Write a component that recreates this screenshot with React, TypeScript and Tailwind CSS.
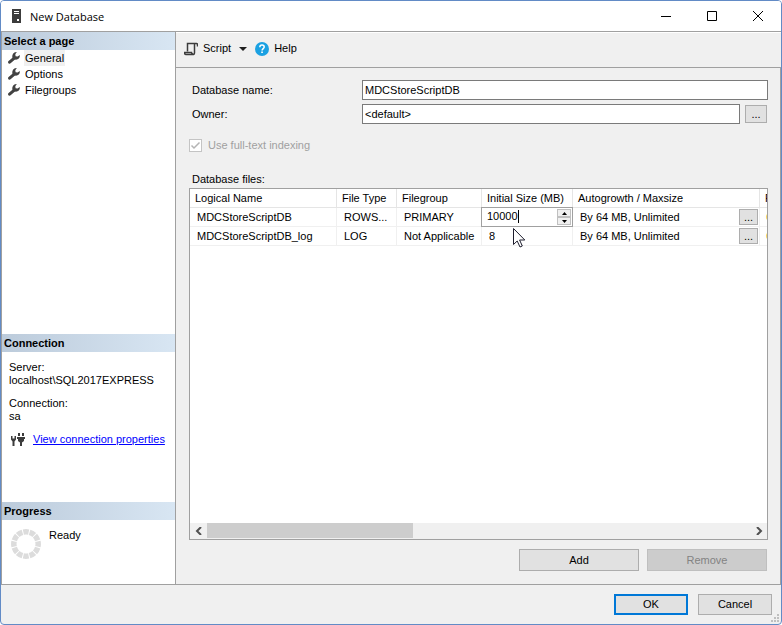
import { useState } from 'react';
import type { ReactNode } from 'react';

interface DbFile {
  name: string;
  type: string;
  filegroup: string;
  size: string;
  growth: string;
  path: string;
}

const pages = ['General', 'Options', 'Filegroups'];

const columns = ['Logical Name', 'File Type', 'Filegroup', 'Initial Size (MB)', 'Autogrowth / Maxsize', 'Path'];

const files: DbFile[] = [
  { name: 'MDCStoreScriptDB', type: 'ROWS...', filegroup: 'PRIMARY', size: '10000', growth: 'By 64 MB, Unlimited', path: 'C:\\' },
  { name: 'MDCStoreScriptDB_log', type: 'LOG', filegroup: 'Not Applicable', size: '8', growth: 'By 64 MB, Unlimited', path: 'C:\\' },
];

const cell = 'h-[19px] border-r border-b border-[#f0f0f0] p-0 pl-[7px] text-left font-normal whitespace-nowrap overflow-hidden';

function ServerIcon() {
  return (
    <svg width="9" height="14" viewBox="0 0 9 14" aria-hidden="true">
      <path d="M0 0h9v14H0z" fill="#3c3c3c" />
      <path d="M2 2h5v1H2zM2 4h5v1H2zM5 10h2v2H5z" fill="#fff" />
    </svg>
  );
}

function WrenchIcon() {
  return (
    <svg width="12" height="12" viewBox="0 0 12 12" aria-hidden="true">
      <path d="M1.600 10.200 6 6.300" stroke="#424242" strokeWidth="3" strokeLinecap="round" />
      <path d="M8.800 0 7.300 2.300 7.600 4.300 9.600 4.600 11.800 3C12 4.800 11.400 6.300 10 7.100 8.600 7.900 7.200 7.700 6 7.300L4.500 5.800C4.100 4.500 4.200 2.900 5.100 1.700 6 .5 7.300-.1 8.800 0Z" fill="#424242" />
    </svg>
  );
}

function ScriptIcon() {
  return (
    <svg width="14" height="14" viewBox="0 0 14 14" fill="none" stroke="#3c3c3c" aria-hidden="true">
      <path d="M3.500 9.500V1.500H12.500Q13.500 1.500 13.500 3V4.500" strokeWidth="1.500" />
      <path d="M10.500 2V11Q10.500 12.500 9 12.500" strokeWidth="1.500" />
      <path d="M9.500 12.500H2Q.5 12.500.5 10.500H7.500Q7.500 12 9 12" strokeWidth="1.500" />
    </svg>
  );
}

function HelpIcon() {
  return (
    <svg width="14" height="14" viewBox="0 0 14 14" aria-hidden="true">
      <circle cx="7" cy="7" r="7" fill="#1ba1e2" />
      <path d="M4.800 5.200C4.900 3.700 5.800 3.100 7 3.100c1.300 0 2.200.8 2.200 1.900 0 1.500-2.100 1.700-2.100 3.400" fill="none" stroke="#fff" strokeWidth="1.500" />
      <path d="M6.200 9.500h1.700v1.600H6.200z" fill="#fff" />
    </svg>
  );
}

function PlugIcon() {
  return (
    <svg width="14" height="14" viewBox="0 0 14 14" fill="#3c3c3c" aria-hidden="true">
      <path d="M0 4h1.500v2.500h2V4H5v3.500L3.500 9.500V14H1.500V9.500L0 7.500Z" />
      <path d="M7 1h2v3H7zM11 1h2v3h-2zM6 5h8v2h-1v2l-2 1.500V14H9v-3.500L7 9V7H6z" />
    </svg>
  );
}

function Ring() {
  return (
    <svg width="30" height="30" viewBox="0 0 30 30" aria-hidden="true">
      <circle cx="15" cy="15" r="12.200" fill="none" stroke="#dcdcdc" strokeWidth="5.500" pathLength="120" strokeDasharray="8.500 1.500" strokeDashoffset="4.250" />
    </svg>
  );
}

function Chevron({ d }: { d: string }) {
  return (
    <svg width="8" height="8" viewBox="0 0 8 8" fill="none" stroke="#505050" strokeWidth="2" aria-hidden="true">
      <path d={d} />
    </svg>
  );
}

function SectionHeader({ children }: { children: ReactNode }) {
  return (
    <h2 className="h-[18px] shrink-0 bg-gradient-to-r from-[#bccbdb] to-[#d8e6f3] pl-[2px] leading-[18px] font-bold">
      {children}
    </h2>
  );
}

function EllipsisButton({ label }: { label: string }) {
  return (
    <button aria-label={label} className="flex h-[18px] w-[22px] shrink-0 items-center justify-center border border-[#adadad] bg-[#e1e1e1]">
      ...
    </button>
  );
}

export default function App() {
  const [page, setPage] = useState('General');
  const [dbName, setDbName] = useState('MDCStoreScriptDB');
  const [owner, setOwner] = useState('<default>');
  const [size, setSize] = useState(files[0].size);

  const step = (n: number) => setSize(s => String(Number(s) + n));

  return (
    <div className="flex min-h-screen flex-col overflow-hidden rounded border border-[#628bc6] bg-[#f0f0f0] font-['Liberation_Sans',Arial,sans-serif] text-[11px] leading-[13px] text-black">
      {/* Title bar */}
      <header className="flex h-[31px] shrink-0 items-center border-b border-[#a0a0a0] bg-white pl-[11px]">
        <ServerIcon />
        <h1 className="ml-[9px] flex-1 font-['Open_Sans','Noto_Sans',sans-serif] text-[11px]">New Database</h1>
        <button aria-label="Minimize" className="flex h-full w-[46px] items-center justify-center">
          <svg width="10" height="10" viewBox="0 0 10 10"><path d="M0 5h10v1H0z" /></svg>
        </button>
        <button aria-label="Maximize" className="flex h-full w-[46px] items-center justify-center">
          <svg width="10" height="10" viewBox="0 0 10 10" fill="none" stroke="#000"><path d="M.5.5h9v9h-9z" /></svg>
        </button>
        <button aria-label="Close" className="flex h-full w-[46px] items-center justify-center">
          <svg width="10" height="10" viewBox="0 0 10 10" stroke="#000"><path d="m0 0 10 10M10 0 0 10" /></svg>
        </button>
      </header>

      <div className="flex flex-1 border-b border-l border-[#a0a0a0]">
        {/* Sidebar */}
        <aside className="flex w-[174px] shrink-0 flex-col border-r border-[#a0a0a0] bg-white">
          <SectionHeader>Select a page</SectionHeader>
          <nav className="flex flex-1 flex-col items-start pl-[6px]">
            {pages.map(p => (
              <a key={p} href="#" onClick={() => setPage(p)} className="flex h-4 items-center gap-1">
                <WrenchIcon />
                <span className={`px-[1px] leading-4 ${page === p ? 'bg-[#f0f0f0]' : ''}`}>{p}</span>
              </a>
            ))}
          </nav>

          <SectionHeader>Connection</SectionHeader>
          <div className="h-[150px] pt-[9px] pl-[7px]">
            <p>Server:</p>
            <p>localhost\SQL2017EXPRESS</p>
            <p className="mt-[10px]">Connection:</p>
            <p>sa</p>
            <a href="#" className="mt-[9px] flex items-center gap-2 pl-[2px] text-[#0000ff]">
              <PlugIcon />
              <span className="underline">View connection properties</span>
            </a>
          </div>

          <SectionHeader>Progress</SectionHeader>
          <div className="flex h-16 gap-2 pt-[9px] pl-[9px]">
            <Ring />
            <span>Ready</span>
          </div>
        </aside>

        <main className="flex min-w-0 flex-1 flex-col border-t border-white">
          {/* Toolbar */}
          <div className="flex h-[35px] shrink-0 items-center border-b border-[#a0a0a0] pb-[3px] pl-2">
            <button className="flex items-center gap-[5px]">
              <ScriptIcon />
              Script
            </button>
            <button aria-label="Script options" className="mx-2">
              <svg width="8" height="4" viewBox="0 0 8 4" fill="#1e1e1e"><path d="M0 0h8L4 4z" /></svg>
            </button>
            <button className="flex items-center gap-[5px]">
              <HelpIcon />
              Help
            </button>
          </div>

          <div className="flex flex-1 flex-col border-r border-[#a0a0a0] pt-3 pr-3 pb-[13px] pl-[13px]">
            <div className="flex h-5 items-center">
              <label htmlFor="db-name" className="w-[173px] shrink-0 pl-[3px]">Database name:</label>
              <input
                id="db-name"
                value={dbName}
                onChange={e => setDbName(e.target.value)}
                className="h-5 min-w-0 flex-1 border border-[#7a7a7a] bg-white px-[2px] outline-none"
              />
            </div>
            <div className="mt-1 flex h-5 items-center">
              <label htmlFor="owner" className="w-[173px] shrink-0 pl-[3px]">Owner:</label>
              <input
                id="owner"
                value={owner}
                onChange={e => setOwner(e.target.value)}
                className="mr-[5px] h-5 min-w-0 flex-1 border border-[#7a7a7a] bg-white px-[2px] outline-none"
              />
              <div className="pr-[1px]">
                <EllipsisButton label="Browse owners" />
              </div>
            </div>

            <label className="mt-3 flex h-[18px] items-center gap-[6px] text-[#a0a0a0]">
              <span className="relative flex">
                <input type="checkbox" checked disabled readOnly className="h-[13px] w-[13px] appearance-none border border-[#c4c4c4] bg-white" />
                <svg className="absolute inset-0" width="13" height="13" viewBox="0 0 13 13" fill="none" stroke="#b4b4b4" strokeWidth="1.500">
                  <path d="m2.500 6.500 2.500 2.500 5.500-5.500" />
                </svg>
              </span>
              Use full-text indexing
            </label>

            <p id="files-label" className="mt-4 h-[18px] pl-[3px] leading-[18px]">Database files:</p>

            {/* File list */}
            <div className="flex flex-1 flex-col border border-[#a0a0a0] bg-white">
              <div className="flex-1 overflow-hidden">
                <table aria-labelledby="files-label" className="w-[760px] table-fixed border-separate border-spacing-0">
                  <colgroup>
                    <col className="w-[147px]" />
                    <col className="w-[60px]" />
                    <col className="w-[85px]" />
                    <col className="w-[91px]" />
                    <col className="w-[187px]" />
                    <col />
                  </colgroup>
                  <thead>
                    <tr>
                      {columns.map(c => (
                        <th key={c} className="h-[19px] border-r border-b border-[#e5e5e5] p-0 pl-[5px] text-left font-normal whitespace-nowrap">{c}</th>
                      ))}
                    </tr>
                  </thead>
                  <tbody>
                    {files.map((f, i) => (
                      <tr key={f.name}>
                        <td className={cell}>{f.name}</td>
                        <td className={cell}>{f.type}</td>
                        <td className={cell}>{f.filegroup}</td>
                        {i === 0 ? (
                          <td className="relative h-[19px] p-0">
                            <div className="absolute -top-px right-0 bottom-0 -left-px flex border border-[#a0a0a0] bg-white">
                              <input
                                aria-label="Initial size"
                                value={size}
                                onChange={e => setSize(e.target.value)}
                                className="w-0 flex-1 pb-[2px] pl-[5px] outline-none"
                              />
                              <span className="absolute top-[2px] left-9 h-[13px] w-px bg-black" />
                              <div className="flex w-[15px] flex-col py-px pr-px">
                                <button aria-label="Increase" onClick={() => step(1)} className="flex flex-1 items-center justify-center border border-[#c0c0c0] bg-[#f0f0f0]">
                                  <svg width="5" height="3" viewBox="0 0 5 3"><path d="M0 3h5L2.500 0z" /></svg>
                                </button>
                                <button aria-label="Decrease" onClick={() => step(-1)} className="flex flex-1 items-center justify-center border border-[#c0c0c0] bg-[#f0f0f0]">
                                  <svg width="5" height="3" viewBox="0 0 5 3"><path d="M0 0h5L2.500 3z" /></svg>
                                </button>
                              </div>
                              {/* Mouse pointer */}
                              <svg className="absolute top-5 left-[31px] z-10" width="13" height="20" viewBox="0 0 13 20" fill="#fff" stroke="#1e1e2e">
                                <path d="M.5.5v16l3.700-3.500 2.800 6 2.300-1-2.700-6h5.200z" />
                              </svg>
                            </div>
                          </td>
                        ) : (
                          <td className={cell}>{f.size}</td>
                        )}
                        <td className={cell}>
                          <div className="flex h-[18px] items-center justify-between">
                            {f.growth}
                            <div className="flex h-4 w-[20px] shrink-0">
                              <button aria-label="Change autogrowth" className="flex h-4 w-[19px] items-center justify-center border border-[#adadad] bg-[#e1e1e1]">...</button>
                            </div>
                          </div>
                        </td>
                        <td className="h-[19px] border-b border-[#f0f0f0] p-0 pl-[6px] text-[#e8a33a]">{f.path}</td>
                      </tr>
                    ))}
                  </tbody>
                </table>
              </div>
              <div className="flex h-4 shrink-0 bg-[#f0f0f0]">
                <button aria-label="Scroll left" className="flex w-[17px] items-center justify-center">
                  <Chevron d="M6 0 2 4l4 4" />
                </button>
                <div className="flex-1">
                  <div className="h-[15px] w-[38%] bg-[#cdcdcd]" />
                </div>
                <button aria-label="Scroll right" className="flex w-[17px] items-center justify-center">
                  <Chevron d="m2 0 4 4-4 4" />
                </button>
              </div>
            </div>

            <div className="mt-[9px] flex justify-end gap-2 pr-px">
              <button className="h-[22px] w-[120px] border border-[#adadad] bg-[#e1e1e1]">Add</button>
              <button disabled className="h-[22px] w-[120px] border border-[#bfbfbf] bg-[#cccccc] text-[#838383]">Remove</button>
            </div>
          </div>
        </main>
      </div>

      <footer className="relative flex h-[39px] shrink-0 justify-end gap-[10px] pt-[9px] pr-[9px]">
        <button className="h-[21px] w-[74px] border-2 border-[#0078d7] bg-[#e1e1e1]">OK</button>
        <button className="h-[21px] w-[74px] border border-[#adadad] bg-[#e1e1e1]">Cancel</button>
        <svg className="absolute right-[2px] bottom-[2px]" width="8" height="8" viewBox="0 0 8 8" fill="#bfbfbf" aria-hidden="true">
          <path d="M6 0h2v2H6zM3 3h2v2H3zM6 3h2v2H6zM0 6h2v2H0zM3 6h2v2H3zM6 6h2v2H6z" />
        </svg>
      </footer>
    </div>
  );
}
